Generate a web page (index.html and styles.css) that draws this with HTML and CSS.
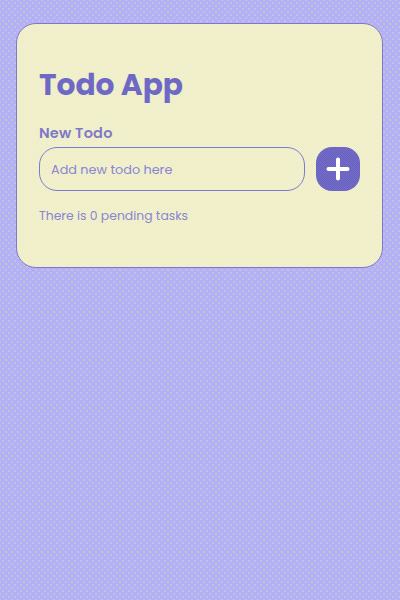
FILE: index.html
```html
<!DOCTYPE html>
<html lang="en">

<head>
    <meta charset="UTF-8">
    <meta name="viewport" content="width=device-width, initial-scale=1.0">
    <title>Todo App</title>
    <link rel="stylesheet" href="styles.css">
</head>

<body>
    <div class="card">
        <h1>Todo App</h1>
        <form class="todo-form">
            <label for="newTodo">New Todo</label>
            <div class="form-row">
                <input type="text" id="newTodo" placeholder="Add new todo here">
                <button type="button" aria-label="Add">
                    <svg width="24" height="24" viewBox="0 0 24 24">
                        <path d="M12 2.5v19M2.5 12h19" stroke="#ffffff" stroke-width="4" stroke-linecap="round" fill="none" />
                    </svg>
                </button>
            </div>
        </form>
        <p class="pending">There is 0 pending tasks</p>
    </div>
</body>

</html>
```

FILE: styles.css
```css
body {
    margin: 0;
    min-height: 100vh;
    padding: 23px 17px 0 16px;
    box-sizing: border-box;
    font-family: 'Poppins', 'Inter', 'Open Sans', sans-serif;
    background-color: #b3b0fa;
    /* dithered look: sparse yellow dots over a fine checker */
    background-image:
        radial-gradient(circle, #d6d6a8 0.6px, transparent 0.8px),
        radial-gradient(circle, #d6d6a8 0.6px, transparent 0.8px),
        repeating-conic-gradient(#b8b5f6 0 25%, #aeabfd 0 50%);
    background-size: 6px 6px, 6px 6px, 2px 2px;
    background-position: 0 0, 3px 3px, 0 0;
}

.card {
    height: 245px;
    box-sizing: border-box;
    padding: 43px 22px 0;
    background-color: #f1f0c9;
    background-image: repeating-conic-gradient(#f7f5bc 0 25%, #eaeadb 0 50%);
    background-size: 2px 2px;
    border: 1px solid #7d78c8;
    border-radius: 20px;
}

h1 {
    margin: 0 0 20px;
    font-size: 29.7px;
    line-height: 36px;
    font-weight: 700;
    color: #6f69c6;
}

label {
    display: block;
    margin-bottom: 4px;
    font-size: 14.5px;
    line-height: 20px;
    font-weight: 600;
    letter-spacing: 0.2px;
    color: #7f79c9;
}

.form-row {
    display: flex;
    align-items: center;
    gap: 11px;
}

input[type="text"] {
    flex: 1;
    min-width: 0;
    height: 44px;
    box-sizing: border-box;
    padding: 1px 11px 0;
    background: transparent;
    border: 1px solid #7d78d0;
    border-radius: 18px;
    font-family: inherit;
    font-size: 12.8px;
    outline: none;
}

input[type="text"]::placeholder {
    color: #8a85d2;
    opacity: 1;
}

button {
    width: 44px;
    height: 44px;
    padding: 0;
    display: flex;
    align-items: center;
    justify-content: center;
    background-color: #6d67c4;
    background-image: repeating-conic-gradient(#6860cc 0 25%, #746dba 0 50%);
    background-size: 2px 2px;
    border: none;
    border-radius: 16px;
}

.pending {
    margin: 15px 0 0;
    font-size: 12.4px;
    line-height: 20px;
    color: #8a85d2;
}
```
